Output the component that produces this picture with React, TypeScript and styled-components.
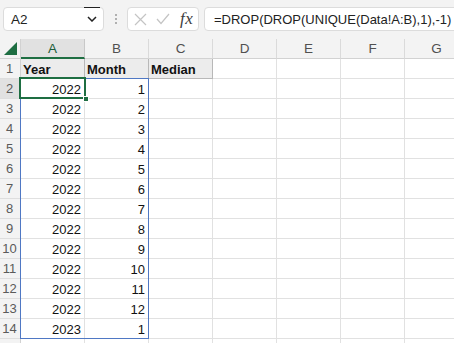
import React from "react";
import styled, { createGlobalStyle } from "styled-components";

const GlobalStyle = createGlobalStyle`
  html, body { margin: 0; padding: 0; background: #ffffff; }
  body {
    width: 454px;
    height: 343px;
    overflow: hidden;
    font-family: "Liberation Sans", Arial, sans-serif;
  }
  * { box-sizing: border-box; }
`;

const Page = styled.div`
  width: 454px;
  height: 343px;
  overflow: hidden;
  display: flex;
  flex-direction: column;
`;

const FormulaBar = styled.div`
  height: 39px;
  flex: none;
  background: #f3f3f3;
  display: flex;
  align-items: flex-start;
  padding: 7px 0 0 3px;
  gap: 0;
`;

const Box = styled.div`
  height: 24px;
  background: #ffffff;
  border: 1px solid #dcdcdc;
  border-radius: 4px;
  display: flex;
  align-items: center;
  position: relative;
`;

const NameBox = styled(Box)`
  width: 101px;
  padding: 0 0 0 7px;
  font-size: 13.5px;
  color: #222;
  justify-content: space-between;
`;

const NameTopMark = styled.div`
  position: absolute;
  top: -1px;
  right: 3px;
  width: 16px;
  height: 1px;
  background: #222;
`;

const Chevron = styled.svg`
  width: 10px;
  height: 6px;
  margin-right: 6px;
`;

const Dots = styled.div`
  width: 23px;
  display: flex;
  flex-direction: column;
  align-items: center;
  justify-content: center;
  gap: 2px;
  height: 24px;
  span {
    width: 2px;
    height: 2px;
    border-radius: 1px;
    background: #9a9a9a;
  }
`;

const FxBox = styled(Box)`
  width: 72px;
  padding: 0 0 0 6px;
  gap: 9px;
`;

const FxText = styled.span`
  font-family: "Liberation Serif", "Times New Roman", serif;
  font-style: italic;
  font-size: 17px;
  color: #3c3c3c;
  margin-left: 1px;
  letter-spacing: 0.5px;
`;

const FormulaInput = styled(Box)`
  flex: 1;
  margin-left: 5px;
  margin-right: -10px;
  padding-left: 9px;
  font-size: 13px;
  color: #222;
  white-space: nowrap;
`;

const Sheet = styled.div`
  position: relative;
  flex: 1;
`;

const Grid = styled.div`
  display: grid;
  grid-template-columns: 21px repeat(7, 64px);
  grid-auto-rows: 20px;
`;

const ColHeader = styled.div<{ $active?: boolean }>`
  background: ${(p) => (p.$active ? "#e1e1e1" : "#f3f3f3")};
  border-right: 1px solid ${(p) => (p.$active ? "#c8c8c8" : "#dadada")};
  border-bottom: ${(p) => (p.$active ? "2px solid #1e6e42" : "1px solid #d2d2d2")};
  color: ${(p) => (p.$active ? "#1d5c39" : "#505050")};
  font-size: 13.5px;
  display: flex;
  align-items: center;
  justify-content: center;
  padding-top: ${(p) => (p.$active ? "1px" : "0")};
`;

const Corner = styled.div`
  background: #f3f3f3;
  border-right: 1px solid #d2d2d2;
  border-bottom: 1px solid #d2d2d2;
  position: relative;
  svg {
    position: absolute;
    right: 3px;
    bottom: 3px;
  }
`;

const RowHeader = styled.div<{ $active?: boolean }>`
  background: ${(p) => (p.$active ? "#e1e1e1" : "#f3f3f3")};
  border-right: 1px solid #d2d2d2;
  border-bottom: 1px solid #dedede;
  color: #5a5a5a;
  font-size: 13px;
  display: flex;
  align-items: center;
  justify-content: center;
  padding-right: 1px;
`;

const Cell = styled.div<{ $align?: "left" | "right"; $bold?: boolean; $fill?: boolean }>`
  border-right: 1px solid ${(p) => (p.$fill ? "#b8b8b8" : "#e1e1e1")};
  border-bottom: 1px solid ${(p) => (p.$fill ? "#b8b8b8" : "#e1e1e1")};
  background: ${(p) => (p.$fill ? "#ececec" : "#ffffff")};
  font-size: 13px;
  line-height: 15px;
  font-weight: ${(p) => (p.$bold ? 700 : 400)};
  color: #111;
  display: flex;
  align-items: flex-end;
  justify-content: ${(p) => (p.$align === "right" ? "flex-end" : "flex-start")};
  padding: 0 3px 1px 2px;
  white-space: nowrap;
  overflow: hidden;
`;

const SpillBorder = styled.div`
  position: absolute;
  left: 20px;
  top: 39px;
  width: 129px;
  height: 261px;
  border: 1px solid #4f78c4;
  pointer-events: none;
`;

const Selection = styled.div`
  position: absolute;
  left: 19px;
  top: 38px;
  width: 67px;
  height: 22px;
  border: 2px solid #1e6e42;
  pointer-events: none;
`;

const FillHandle = styled.div`
  position: absolute;
  right: -5px;
  bottom: -5px;
  width: 6px;
  height: 6px;
  background: #1e6e42;
  border: 1px solid #ffffff;
`;

const columns = ["A", "B", "C", "D", "E", "F", "G"];

const data: [number, number][] = [
  [2022, 1],
  [2022, 2],
  [2022, 3],
  [2022, 4],
  [2022, 5],
  [2022, 6],
  [2022, 7],
  [2022, 8],
  [2022, 9],
  [2022, 10],
  [2022, 11],
  [2022, 12],
  [2023, 1],
];

export default function App() {
  const rows: React.ReactNode[] = [];

  rows.push(<RowHeader key="rh1">1</RowHeader>);
  rows.push(
    <Cell key="a1" $bold $fill>
      Year
    </Cell>
  );
  rows.push(
    <Cell key="b1" $bold $fill>
      Month
    </Cell>
  );
  rows.push(
    <Cell key="c1" $bold $fill>
      Median
    </Cell>
  );
  for (let c = 3; c < 7; c++) rows.push(<Cell key={`r1c${c}`} />);

  data.forEach(([y, m], i) => {
    const r = i + 2;
    rows.push(
      <RowHeader key={`rh${r}`} $active={r === 2}>
        {r}
      </RowHeader>
    );
    rows.push(
      <Cell key={`a${r}`} $align="right">
        {y}
      </Cell>
    );
    rows.push(
      <Cell key={`b${r}`} $align="right">
        {m}
      </Cell>
    );
    for (let c = 2; c < 7; c++) rows.push(<Cell key={`r${r}c${c}`} />);
  });

  rows.push(<RowHeader key="rh15" />);
  for (let c = 0; c < 7; c++) rows.push(<Cell key={`r15c${c}`} />);

  return (
    <>
      <GlobalStyle />
      <Page>
        <FormulaBar>
          <NameBox>
            <span>A2</span>
            <Chevron viewBox="0 0 10 6">
              <polyline points="1,1 5,5 9,1" fill="none" stroke="#222" strokeWidth="1.5" />
            </Chevron>
            <NameTopMark />
          </NameBox>
          <Dots>
            <span />
            <span />
            <span />
          </Dots>
          <FxBox>
            <svg width="13" height="13" viewBox="0 0 13 13">
              <path d="M1 1 L12 12 M12 1 L1 12" stroke="#c4c4c4" strokeWidth="1.2" fill="none" />
            </svg>
            <svg width="14" height="12" viewBox="0 0 14 12">
              <polyline points="1,6 5,10.5 13,1" stroke="#c4c4c4" strokeWidth="1.2" fill="none" />
            </svg>
            <FxText>fx</FxText>
          </FxBox>
          <FormulaInput>=DROP(DROP(UNIQUE(Data!A:B),1),-1)</FormulaInput>
        </FormulaBar>
        <Sheet>
          <Grid>
            <Corner>
              <svg width="13" height="13" viewBox="0 0 13 13">
                <polygon points="13,0 13,13 0,13" fill="#1e6e42" />
              </svg>
            </Corner>
            {columns.map((c) => (
              <ColHeader key={c} $active={c === "A"}>
                {c}
              </ColHeader>
            ))}
            {rows}
          </Grid>
          <SpillBorder />
          <Selection>
            <FillHandle />
          </Selection>
        </Sheet>
      </Page>
    </>
  );
}
